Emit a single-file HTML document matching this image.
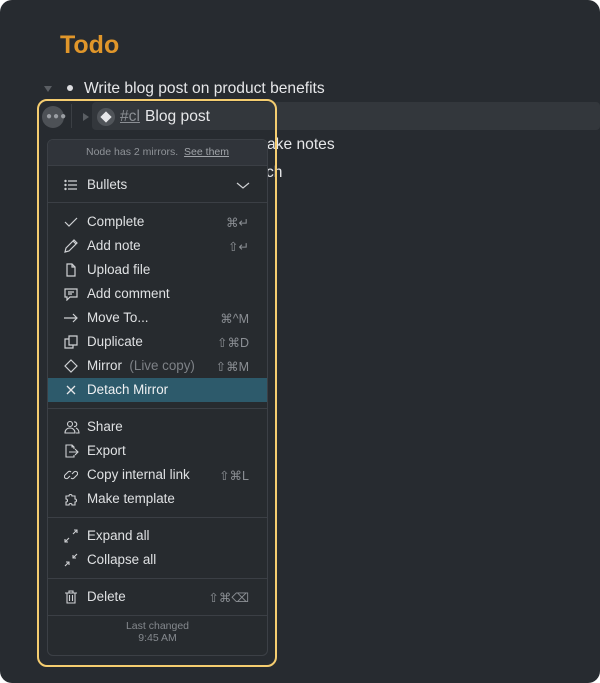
<!DOCTYPE html>
<html><head><meta charset="utf-8"><style>
*{margin:0;padding:0;box-sizing:border-box}
html,body{width:600px;height:683px;background:#fff;overflow:hidden}
body{font-family:"Liberation Sans",sans-serif}
.win{position:absolute;left:0;top:0;width:600px;height:683px;background:#272b30;border-radius:12px;overflow:hidden}
.abs{position:absolute}
.t{color:#e6e7e9;font-size:15.6px;white-space:nowrap}
.menu{position:absolute;left:47px;top:139px;width:221px;height:517px;background:#272b2f;border:1px solid #3c4046;border-radius:6px;z-index:5;overflow:hidden}
.row{position:absolute;left:0;width:219px;height:24px;color:#dfe1e3;font-size:13.4px}
.row .l{position:absolute;left:39px;top:4px}
.row .k{position:absolute;right:18px;top:5px;color:#8b8f94;font-size:12.5px}
.row svg{position:absolute;left:16px;top:5px}
.sep{position:absolute;left:0;width:219px;height:1px;background:#3b3f45}
</style></head><body><div class="win">
<div class="abs" style="left:60px;top:31px;color:#e0962a;font-size:25px;font-weight:bold">Todo</div>
<div class="abs" style="left:44px;top:86px;width:0;height:0;border-left:4px solid transparent;border-right:4px solid transparent;border-top:6px solid #5a5e63"></div>
<div class="abs" style="left:67px;top:85px;width:6px;height:6px;border-radius:50%;background:#dcdde0"></div>
<div class="abs t" style="left:84px;top:80px">Write blog post on product benefits</div>
<div class="abs" style="left:92px;top:102px;width:508px;height:28px;background:#33373c;border-radius:4px"></div>
<div class="abs" style="left:42px;top:106px;width:22px;height:22px;border-radius:50%;background:#4d5156"></div>
<div class="abs" style="left:46px;top:115px;color:#9a9ea3;font-size:10px;letter-spacing:1px;line-height:4px">&#9679;&#9679;&#9679;</div>
<div class="abs" style="left:71px;top:104px;width:1px;height:24px;background:#3b3f44"></div>
<div class="abs" style="left:83px;top:113px;width:0;height:0;border-top:4px solid transparent;border-bottom:4px solid transparent;border-left:6px solid #5a5e63"></div>
<div class="abs" style="left:97px;top:108px;width:18px;height:18px;border-radius:50%;background:#505459"></div>
<div class="abs" style="left:102px;top:113px;width:8px;height:8px;background:#e6e7e9;transform:rotate(45deg)"></div>
<div class="abs" style="left:120px;top:108px;color:#8b8f94;font-size:15.6px;text-decoration:underline">#cl</div>
<div class="abs t" style="left:145px;top:108px">Blog post</div>
<div class="abs t" style="left:267px;top:136px">ake notes</div>
<div class="abs t" style="left:266px;top:164px">ch</div>
<div class="abs" style="left:37px;top:99px;width:240px;height:568px;border:2px solid #f5cd70;border-radius:10px;z-index:6"></div>
<div class="menu">
<div class="abs" style="left:0;top:0;width:219px;height:25px;background:#30343a;color:#8f9398;font-size:10.5px;text-align:center;line-height:25px">Node has 2 mirrors.&nbsp; <span style="text-decoration:underline;color:#a0a4a9">See them</span></div>
<div class="sep" style="top:25px"></div>
<div class="row" style="top:33px"><svg width="14" height="14" viewBox="0 0 14 14" fill="none" stroke="#cfd1d4" stroke-width="1.2"><path d="M4 3h9M4 7h9M4 11h9"/><circle cx="1.5" cy="3" r=".6"/><circle cx="1.5" cy="7" r=".6"/><circle cx="1.5" cy="11" r=".6"/></svg><span class="l">Bullets</span><svg style="left:188px" width="14" height="14" viewBox="0 0 14 14" fill="none" stroke="#cfd1d4" stroke-width="1.2"><path d="M1 5l6 5 6-5"/></svg></div>
<div class="sep" style="top:62px"></div>
<div class="row" style="top:70px"><svg width="14" height="14" viewBox="0 0 14 14" fill="none" stroke="#cfd1d4" stroke-width="1.2"><path d="M1 7l4 4 8-8"/></svg><span class="l">Complete</span><span class="k">⌘↵</span></div>
<div class="row" style="top:94px"><svg width="14" height="14" viewBox="0 0 14 14" fill="none" stroke="#cfd1d4" stroke-width="1.2"><path d="M1 13l1-4 8-8 3 3-8 8zM9 2l3 3"/></svg><span class="l">Add note</span><span class="k">⇧↵</span></div>
<div class="row" style="top:118px"><svg width="14" height="14" viewBox="0 0 14 14" fill="none" stroke="#cfd1d4" stroke-width="1.2"><path d="M3 1h5l3 3v9H3zM8 1v3h3"/></svg><span class="l">Upload file</span></div>
<div class="row" style="top:142px"><svg width="14" height="14" viewBox="0 0 14 14" fill="none" stroke="#cfd1d4" stroke-width="1.2"><path d="M1 2h12v8H6l-3 3v-3H1zM4 5h6M4 7h4"/></svg><span class="l">Add comment</span></div>
<div class="row" style="top:166px"><svg width="14" height="14" viewBox="0 0 14 14" fill="none" stroke="#cfd1d4" stroke-width="1.2"><path d="M0 7h13M9 3l4 4-4 4"/></svg><span class="l">Move To...</span><span class="k">⌘^M</span></div>
<div class="row" style="top:190px"><svg width="14" height="14" viewBox="0 0 14 14" fill="none" stroke="#cfd1d4" stroke-width="1.2"><path d="M5 1h8v9H5zM5 4H1v9h8v-3"/></svg><span class="l">Duplicate</span><span class="k">⇧⌘D</span></div>
<div class="row" style="top:214px"><svg width="14" height="14" viewBox="0 0 14 14" fill="none" stroke="#cfd1d4" stroke-width="1.2"><path d="M7 1l6 6-6 6-6-6z"/></svg><span class="l">Mirror <span style="color:#7e8287">&nbsp;(Live copy)</span></span><span class="k">⇧⌘M</span></div>
<div class="row" style="top:238px;background:#2d5a6b"><svg width="14" height="14" viewBox="0 0 14 14" fill="none" stroke="#e6e7e9" stroke-width="1.3"><path d="M3 3l8 8M11 3l-8 8"/></svg><span class="l" style="color:#eef0f2">Detach Mirror</span></div>
<div class="sep" style="top:268px"></div>
<div class="row" style="top:275px"><svg width="16" height="14" viewBox="0 0 16 14" fill="none" stroke="#cfd1d4" stroke-width="1.1"><circle cx="6" cy="4" r="2.5"/><path d="M1 13c0-3 2-5 5-5s5 2 5 5zM10 2a2.3 2.3 0 110 4.5M12 8c2 1 3 3 3 5h-3"/></svg><span class="l">Share</span></div>
<div class="row" style="top:299px"><svg width="15" height="14" viewBox="0 0 15 14" fill="none" stroke="#cfd1d4" stroke-width="1.1"><path d="M10 5V3L8 1H2v12h8v-2M8 1v2h2M5 8h9M11 5l3 3-3 3"/></svg><span class="l">Export</span></div>
<div class="row" style="top:323px"><svg width="14" height="14" viewBox="0 0 14 14" fill="none" stroke="#cfd1d4" stroke-width="1.1"><path d="M6 8L4 10a2 2 0 01-3-3l3-3a2 2 0 013 0M8 6l2-2a2 2 0 013 3l-3 3a2 2 0 01-3 0"/></svg><span class="l">Copy internal link</span><span class="k">⇧⌘L</span></div>
<div class="row" style="top:347px"><svg width="14" height="14" viewBox="0 0 14 14" fill="none" stroke="#cfd1d4" stroke-width="1.1"><path d="M2 4h3a1.5 1.5 0 113 0h3v3a1.5 1.5 0 110 3v3H8a1.5 1.5 0 10-3 0H2v-3a1.5 1.5 0 100-3z"/></svg><span class="l">Make template</span></div>
<div class="sep" style="top:377px"></div>
<div class="row" style="top:384px"><svg width="14" height="14" viewBox="0 0 14 14" fill="none" stroke="#cfd1d4" stroke-width="1.1"><path d="M1 13l4-4M1 10v3h3M13 1L9 5M10 1h3v3"/></svg><span class="l">Expand all</span></div>
<div class="row" style="top:408px"><svg width="14" height="14" viewBox="0 0 14 14" fill="none" stroke="#cfd1d4" stroke-width="1.1"><path d="M1 13l4-4M2 9h3v3M13 1L9 5M9 2v3h3"/></svg><span class="l">Collapse all</span></div>
<div class="sep" style="top:438px"></div>
<div class="row" style="top:445px"><svg width="14" height="14" viewBox="0 0 14 14" fill="none" stroke="#cfd1d4" stroke-width="1.1"><path d="M1 3h12M5 3V1h4v2M3 3v10h8V3M5.5 5v6M8.5 5v6"/></svg><span class="l">Delete</span><span class="k">⇧⌘⌫</span></div>
<div class="sep" style="top:475px"></div>
<div class="abs" style="left:0;top:480px;width:219px;text-align:center;color:#85898e;font-size:10.5px;line-height:12px">Last changed<br>9:45 AM</div>
</div>
</div></body></html>
